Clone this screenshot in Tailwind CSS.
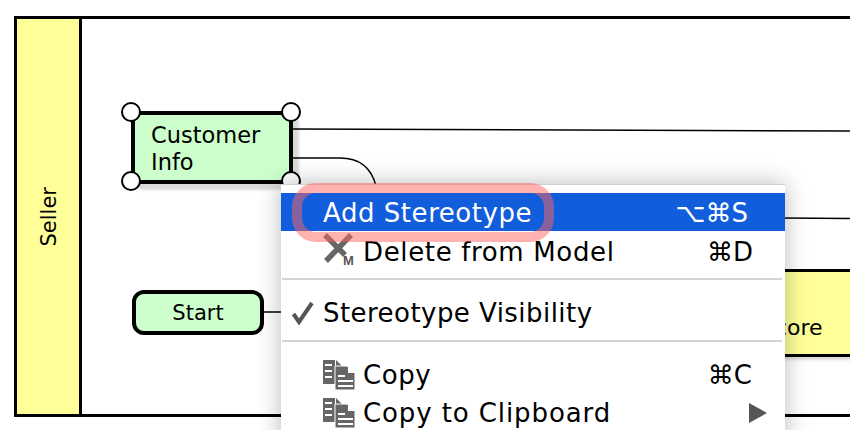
<!DOCTYPE html>
<html lang="en">
<head>
    <meta charset="UTF-8">
    <title>Diagram context menu</title>
    <script src="https://cdn.jsdelivr.net/npm/@tailwindcss/browser@4"></script>
</head>
<body class="bg-white">
    <div class="relative w-[850px] h-[430px] overflow-hidden bg-white text-black font-['DejaVu_Sans',sans-serif]">

        <!-- swimlane frame -->
        <div class="absolute left-[14px] top-[16px] w-[900px] h-[401px] border-[3px] border-black flex">
            <div class="w-[65px] h-full bg-[#ffff99] border-r-[3px] border-black flex items-center justify-center pl-[3px]">
                <span class="[writing-mode:vertical-rl] rotate-180 text-[21px] leading-none">Seller</span>
            </div>
        </div>

        <!-- connectors -->
        <svg class="absolute inset-0" width="850" height="430" fill="none" stroke="#000">
            <path d="M293 129 L850 131" stroke-width="1.5"/>
            <path d="M293 158 L340 158 C362 158 372 170 376 186" stroke-width="1.5"/>
            <path d="M780 218 L850 218.500" stroke-width="1.500"/>
            <path d="M262 312 L285 312" stroke-width="1.500"/>
        </svg>

        <!-- nodes -->
        <div class="absolute left-[131px] top-[111px] w-[162px] h-[73px] border-[4px] border-black rounded-[6px] bg-[#ccffcc] shadow-[6px_6px_3px_rgba(0,0,0,0.15)] pl-[16px] pt-[7px] text-[22.5px] leading-[27px]">
            Customer<br>Info
        </div>
        <div class="absolute left-[121px] top-[102px] w-[20px] h-[20px] rounded-full bg-white border-2 border-black"></div>
        <div class="absolute left-[281px] top-[102px] w-[20px] h-[20px] rounded-full bg-white border-2 border-black"></div>
        <div class="absolute left-[121px] top-[171px] w-[20px] h-[20px] rounded-full bg-white border-2 border-black"></div>
        <div class="absolute left-[281px] top-[171px] w-[20px] h-[20px] rounded-full bg-white border-2 border-black"></div>

        <div class="absolute left-[132px] top-[290px] w-[132px] h-[45px] border-[4px] border-black rounded-[12px] bg-[#ccffcc] flex items-center justify-center pt-[3px] text-[21px]">
            Start
        </div>

        <div class="absolute left-[640px] top-[269px] w-[260px] h-[88px] border-[3px] border-black rounded-[6px] bg-[#ffff99] shadow-[3px_3px_3px_rgba(0,0,0,0.15)] pt-[43px] pl-[118px] text-[22px] leading-[26px]">
            Score
        </div>

        <!-- context menu -->
        <div class="absolute left-[281px] top-[184px] w-[504px] h-[260px] bg-white border-t border-[#d0d0d0] pt-[8px] shadow-[0_0_22px_rgba(0,0,0,0.28)] text-[26px] tracking-[0.55px]">
            <div class="h-[38px] bg-[#115ddc] text-white flex items-center pl-[42px] pr-[37px] pt-[2px] justify-between">
                <span>Add Stereotype</span>
                <span class="tracking-normal">⌥⌘S</span>
            </div>
            <div class="h-[39px] flex items-center pl-[42px] pr-[32px] justify-between">
                <span class="flex items-center gap-[9px]">
                    <svg width="32" height="34" viewBox="0 0 32 34" class="shrink-0 -ml-[1px] -mt-[2px] overflow-visible">
                        <path d="M3 2 L23 22 M29 2 L4 28" stroke="#666" stroke-width="5.500" fill="none"/>
                        <text x="21" y="32" font-size="13" font-weight="700" fill="#555" font-family="Liberation Sans, sans-serif">M</text>
                    </svg>
                    <span class="pt-[3px] tracking-[0.65px]">Delete from Model</span>
                </span>
                <span class="tracking-normal pt-[3px]">⌘D</span>
            </div>
            <div class="h-[2px] bg-[#d5d5d5] mt-[8px] mb-[14px] ml-[1px] mr-[3px]"></div>
            <div class="relative h-[38px] flex items-center pl-[42px]">
                <svg width="24" height="24" viewBox="0 0 24 24" class="absolute left-[10px] top-[7px]">
                    <path d="M2.500 13 L8 21 L21 2" stroke="#555" stroke-width="4" fill="none"/>
                </svg>
                <span class="tracking-[0.45px]">Stereotype Visibility</span>
            </div>
            <div class="h-[2px] bg-[#d5d5d5] mt-[8px] mb-[14px] ml-[1px] mr-[3px]"></div>
            <div class="h-[38px] flex items-center pl-[42px] pr-[33px] justify-between">
                <span class="flex items-center gap-[8px]">
                    <svg width="32" height="30" viewBox="0 0 32 30" class="shrink-0">
                        <path d="M0 0 H12 V6 H12 V24 H0 Z" fill="#666"/>
                        <path d="M13 0 L19 6 H13 Z" fill="#666"/>
                        <path d="M12 6 H24 L32 13 V30 H12 Z" fill="#666" stroke="#fff" stroke-width="1"/>
                        <path d="M25 6 L32 13 H25 Z" fill="#fff"/>
                        <path d="M2 5 H9 M2 11 H9 M2 17 H9 M15 16 H22 M15 21 H30 M15 26 H30" stroke="#fff" stroke-width="2"/>
                    </svg>
                    Copy
                </span>
                <span class="tracking-normal">⌘C</span>
            </div>
            <div class="h-[38px] flex items-center pl-[42px] pr-[18px] justify-between">
                <span class="flex items-center gap-[8px] tracking-[0.9px]">
                    <svg width="32" height="30" viewBox="0 0 32 30" class="shrink-0">
                        <path d="M0 0 H12 V6 H12 V24 H0 Z" fill="#666"/>
                        <path d="M13 0 L19 6 H13 Z" fill="#666"/>
                        <path d="M12 6 H24 L32 13 V30 H12 Z" fill="#666" stroke="#fff" stroke-width="1"/>
                        <path d="M25 6 L32 13 H25 Z" fill="#fff"/>
                        <path d="M2 5 H9 M2 11 H9 M2 17 H9 M15 16 H22 M15 21 H30 M15 26 H30" stroke="#fff" stroke-width="2"/>
                    </svg>
                    Copy to Clipboard
                </span>
                <svg width="18" height="20" viewBox="0 0 18 20"><path d="M0 0 L18 10 L0 20 Z" fill="#555"/></svg>
            </div>
        </div>

        <!-- red annotation round the menu item -->
        <div class="absolute left-[292px] top-[183px] w-[262px] h-[59px] rounded-[24px] border-[10px] border-[#ff6660]/50"></div>
    </div>
</body>
</html>
